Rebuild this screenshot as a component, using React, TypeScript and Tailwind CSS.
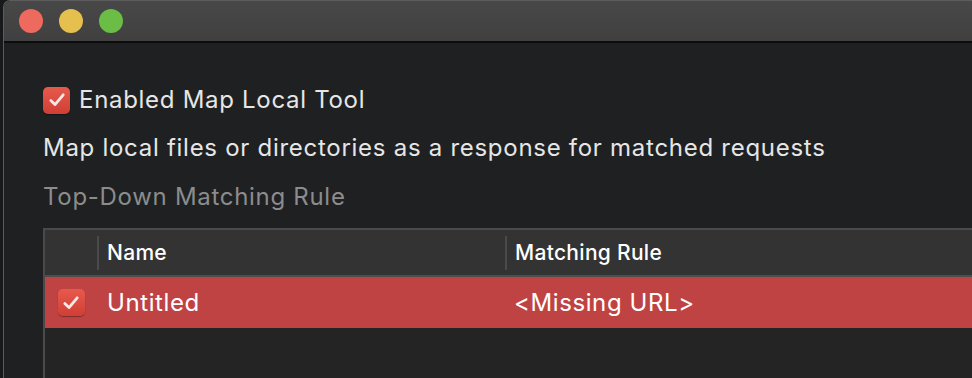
import React from "react";

const font = { fontFamily: "Inter, 'Liberation Sans', sans-serif" };

const Check: React.FC = () => (
  <div className="w-[27px] h-[27px] rounded-[5px] bg-gradient-to-b from-[#e65a4c] to-[#d03e35] shadow-[0_1px_1px_rgba(0,0,0,0.35)] flex items-center justify-center shrink-0">
    <svg width="20" height="20" viewBox="0 0 20 20" fill="none">
      <path
        d="M3.8 10.6 L8 14.6 L16.2 4.8"
        stroke="#f8e9e7"
        strokeWidth="2.8"
        strokeLinecap="round"
        strokeLinejoin="round"
      />
    </svg>
  </div>
);

export default function App() {
  return (
    <div className="w-[972px] h-[378px] bg-[#18191a] overflow-hidden" style={font}>
      <div className="ml-[3px] h-full rounded-tl-[7px] border-l border-t border-[#5c5c5c] bg-[#1f2022] flex flex-col overflow-hidden">
        <div className="h-[42px] shrink-0 bg-gradient-to-b from-[#484848] to-[#404040] border-b-2 border-[#0c0c0c] flex items-center gap-[16px] pl-[15px]">
          <div className="w-[24px] h-[24px] rounded-full bg-[#ee6a5f]" />
          <div className="w-[24px] h-[24px] rounded-full bg-[#e5c04f]" />
          <div className="w-[24px] h-[24px] rounded-full bg-[#6cbd45]" />
        </div>

        <div className="pl-[39px] pt-[42px] flex flex-col">
          <div className="flex items-center gap-[9px] h-[30px]">
            <Check />
            <span className="text-[24px] text-[#e6e6e6] tracking-[0.7px]">Enabled Map Local Tool</span>
          </div>
          <div className="mt-[18px] h-[30px] flex items-center text-[24px] text-[#e6e6e6] tracking-[0.72px]">
            Map local files or directories as a response for matched requests
          </div>
          <div className="mt-[19px] h-[30px] flex items-center text-[24px] text-[#8c8c8c] tracking-[0.7px]">
            Top-Down Matching Rule
          </div>

          <div className="mt-[16px] h-[200px] border-l-2 border-t-2 border-[#4a4a4a] bg-[#242424] flex flex-col">
            <div className="h-[47px] bg-[#333333] border-b-2 border-[#4d4d4d] flex items-center">
              <div className="w-[54px] h-full flex items-center justify-end">
                <div className="w-[2px] h-[34px] bg-[#4a4a4a]" />
              </div>
              <div className="w-[406px] h-full flex items-center pl-[8px] text-[21px] font-medium text-white tracking-[0.3px]">
                Name
              </div>
              <div className="w-[2px] h-[34px] bg-[#4a4a4a]" />
              <div className="flex-1 h-full flex items-center pl-[8px] text-[21px] font-medium text-white tracking-[0.3px]">
                Matching Rule
              </div>
            </div>
            <div className="h-[51px] bg-[#c04343] flex items-center">
              <div className="w-[56px] flex justify-center pr-[4px]">
                <Check />
              </div>
              <div className="w-[406px] pl-[6px] text-[24px] text-white tracking-[0.6px]">Untitled</div>
              <div className="flex-1 pl-[7px] text-[24px] text-white tracking-[0.6px]">&lt;Missing URL&gt;</div>
            </div>
          </div>
        </div>
      </div>
    </div>
  );
}
